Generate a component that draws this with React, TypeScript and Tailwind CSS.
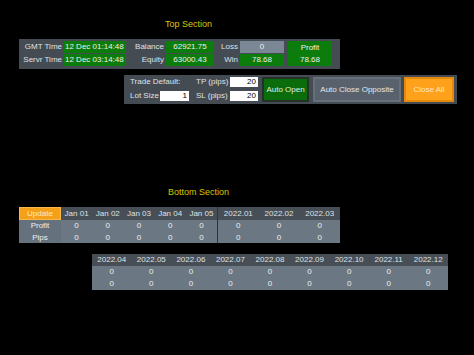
const jan = ['Jan 01', 'Jan 02', 'Jan 03', 'Jan 04', 'Jan 05'];
const months1 = ['2022.01', '2022.02', '2022.03'];
const months2 = ['2022.04', '2022.05', '2022.06', '2022.07', '2022.08', '2022.09', '2022.10', '2022.11', '2022.12'];

function Label({ children, className = '' }: { children: React.ReactNode; className?: string }) {
  return <div className={`flex items-center justify-end pr-[2px] text-[#dfe2e6] ${className}`}>{children}</div>;
}

function Cell({ children, className = '' }: { children: React.ReactNode; className?: string }) {
  return <div className={`flex items-center justify-center text-[#eef0ee] ${className}`}>{children}</div>;
}

function TopPanel() {
  return (
    <div className="ml-[19px] w-[321px] h-[30px] bg-[#454b53] pt-[2px]">
      <div className="grid grid-cols-[45px_62px_40px_48px_26px_44px_48px] grid-rows-[12px_12px] gap-y-[1px]">
        <Label>GMT Time</Label>
        <Cell className="bg-[#0c7c0c] justify-start pl-[1px]">12 Dec 01:14:48</Cell>
        <Label>Balance</Label>
        <Cell className="bg-[#0c7c0c]">62921.75</Cell>
        <Label>Loss</Label>
        <Cell className="bg-[#7b8795]">0</Cell>
        <div className="row-span-2 pl-[4px]">
          <div className="h-full bg-[#0c7c0c] flex flex-col text-[#eef0ee]">
            <span className="h-[13px] flex items-center justify-center">Profit</span>
            <span className="h-[12px] flex items-center justify-center">78.68</span>
          </div>
        </div>
        <Label>Servr Time</Label>
        <Cell className="bg-[#0c7c0c] justify-start pl-[1px]">12 Dec 03:14:48</Cell>
        <Label>Equity</Label>
        <Cell className="bg-[#0c7c0c]">63000.43</Cell>
        <Label>Win</Label>
        <Cell className="bg-[#0c7c0c]">78.68</Cell>
      </div>
    </div>
  );
}

function Input({ value, className = '' }: { value: string; className?: string }) {
  return (
    <div className={`h-[10px] bg-white text-black flex items-center justify-end pr-[2px] ${className}`}>{value}</div>
  );
}

function TradePanel() {
  return (
    <div className="ml-[124px] w-[333px] h-[29px] bg-[#454b53] flex items-start pt-[2px] pl-[6px]">
      <div className="grid grid-cols-[30px_29px_7px_34px_28px] grid-rows-[10px_10px] gap-y-[4px] text-[#dfe2e6]">
        <div className="col-span-2 flex items-center">Trade Default:</div>
        <div />
        <div className="flex items-center">TP (pips)</div>
        <Input value="20" />
        <div className="flex items-center">Lot Size</div>
        <Input value="1" />
        <div />
        <div className="flex items-center">SL (pips)</div>
        <Input value="20" />
      </div>
      <button className="ml-[4px] w-[47px] h-[25px] bg-[#0a6c0a] border-2 border-[#23332a] text-[#e3eae3] flex items-center justify-center">
        Auto Open
      </button>
      <button className="ml-[4px] w-[88px] h-[25px] bg-[#59626c] border-2 border-[#66707b] text-[#e3e6ea] flex items-center justify-center">
        Auto Close Opposite
      </button>
      <button className="ml-[3px] w-[50px] h-[25px] bg-[#ffa11a] border-2 border-[#e38a0e] text-[#ffe6c4] flex items-center justify-center">
        Close All
      </button>
    </div>
  );
}

function Title({ text, pad }: { text: string; pad: string }) {
  return <div className={`h-[12px] leading-[12px] text-[9px] text-[#d8c600] ${pad}`}>{text}</div>;
}

function StatsTable() {
  return (
    <div className="mt-[9px] ml-[19px] w-[321px] h-[36px] flex bg-[#6c7784]">
      <div className="w-[42px] flex flex-col">
        <div className="h-[13px] bg-[#f5a01a] border border-[#fbb84a] text-[#ffe9c2] flex items-center justify-center">Update</div>
        <Cell className="h-[12px] bg-[#66717e]">Profit</Cell>
        <Cell className="h-[11px] bg-[#66717e]">Pips</Cell>
      </div>
      <div className="grid grid-cols-5 w-[156px] grid-rows-[13px_12px_11px]">
        {jan.map(d => (
          <div key={d} className="bg-[#474e56] flex items-center justify-center text-[#dfe2e6]">{d}</div>
        ))}
        {jan.map(d => <Cell key={d + 'p'}>0</Cell>)}
        {jan.map(d => <Cell key={d + 'q'}>0</Cell>)}
      </div>
      <div className="w-[1px] bg-[#2f343a]" />
      <div className="grid grid-cols-3 flex-1 grid-rows-[13px_12px_11px]">
        {months1.map(d => (
          <div key={d} className="bg-[#474e56] flex items-center justify-center text-[#dfe2e6]">{d}</div>
        ))}
        {months1.map(d => <Cell key={d + 'p'}>0</Cell>)}
        {months1.map(d => <Cell key={d + 'q'}>0</Cell>)}
      </div>
    </div>
  );
}

function MonthTable() {
  return (
    <div className="mt-[11px] ml-[92px] w-[356px] h-[36px] bg-[#6c7784] grid grid-cols-9 grid-rows-[12px_12px_12px]">
      {months2.map(d => (
        <div key={d} className="bg-[#474e56] flex items-center justify-center text-[#dfe2e6]">{d}</div>
      ))}
      {months2.map(d => <Cell key={d + 'p'}>0</Cell>)}
      {months2.map(d => <Cell key={d + 'q'}>0</Cell>)}
    </div>
  );
}

export default function App() {
  return (
    <div className="w-[474px] h-[355px] bg-black font-['Liberation_Sans',Arial,sans-serif] text-[8px] leading-none flex flex-col pt-[18px]">
      <Title text="Top Section" pad="pl-[165px]" />
      <div className="mt-[9px]">
        <TopPanel />
      </div>
      <div className="mt-[6px]">
        <TradePanel />
      </div>
      <div className="mt-[82px]">
        <Title text="Bottom Section" pad="pl-[168px]" />
      </div>
      <StatsTable />
      <MonthTable />
    </div>
  );
}
